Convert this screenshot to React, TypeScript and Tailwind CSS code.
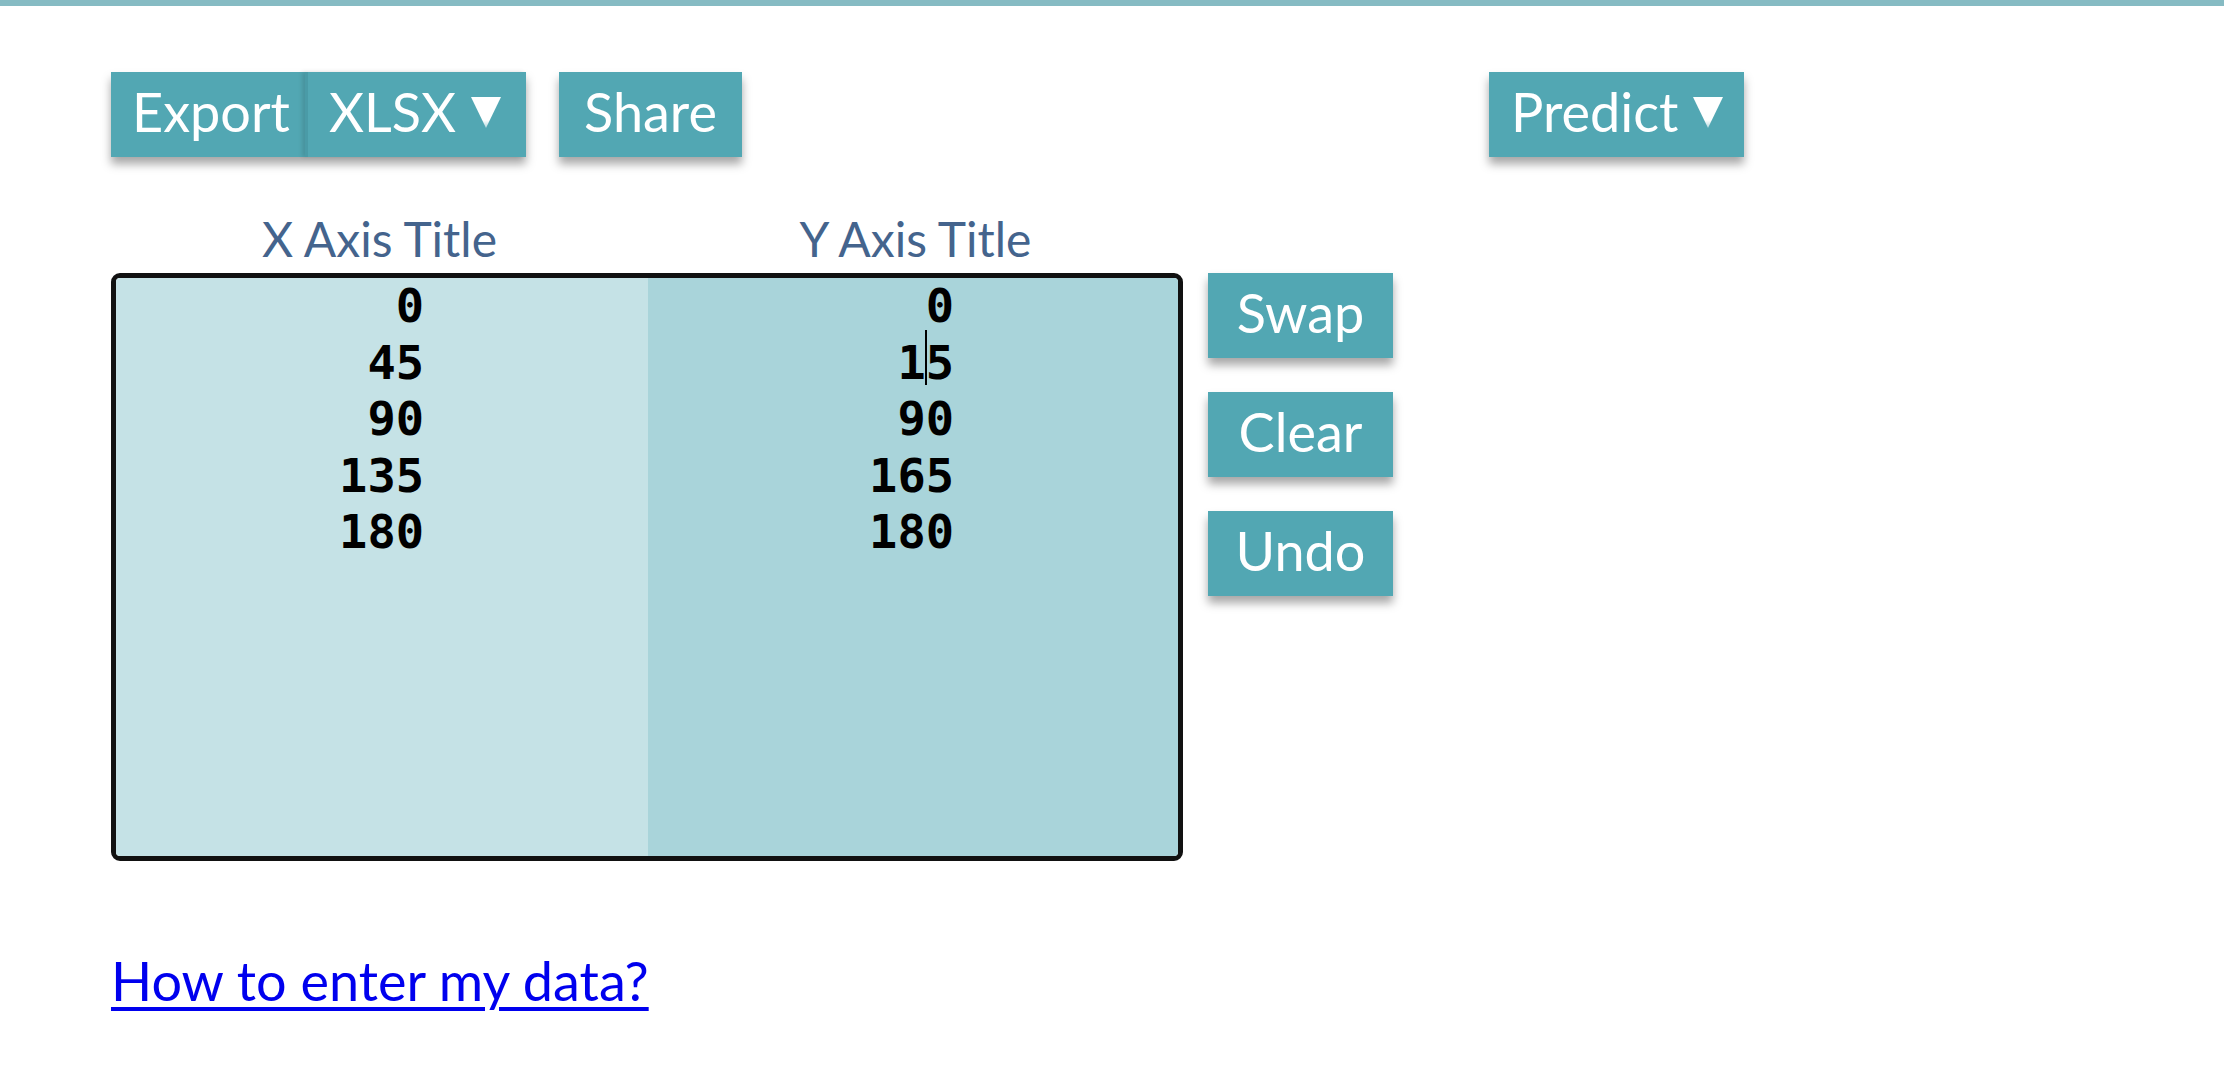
import React from "react";

const Tri = () => (
  <svg width="32" height="33" viewBox="0 0 32 33" className="inline-block">
    <defs>
      <linearGradient id="tg" x1="0" y1="0" x2="0" y2="1">
        <stop offset="0" stopColor="#ffffff" />
        <stop offset="0.75" stopColor="#ffffff" />
        <stop offset="1" stopColor="#ffffff" stopOpacity="0.55" />
      </linearGradient>
    </defs>
    <polygon points="1,1 31,1 16,32" fill="url(#tg)" />
  </svg>
);

const SideBtn = ({ label }: { label: string }) => (
  <button className="h-[85px] w-[185px] bg-[#52a7b3] text-white text-[54px] leading-none pb-[5px] shadow-[0_7px_9px_rgba(0,0,0,0.35)] flex items-center justify-center">
    {label}
  </button>
);

const xs = ["0", "45", "90", "135", "180"];

export default function App() {
  return (
    <div
      className="min-h-screen bg-white"
      style={{ fontFamily: "Lato, 'Noto Sans', sans-serif" }}
    >
      <div className="h-[6px] bg-[#86bbc3]" />
      <div className="pl-[111px] pt-[66px]">
        <div className="flex items-start h-[85px]">
          <div className="flex h-[85px] shadow-[0_7px_9px_rgba(0,0,0,0.35)]">
            <button className="h-full w-[194px] bg-[#52a7b3] text-white text-[54px] leading-none pl-[21px] pb-[5px] text-left">
              Export
            </button>
            <button className="h-full w-[221px] bg-[#52a7b3] text-white text-[54px] leading-none border-l-[3px] border-[#4a9ba7] shadow-[-3px_0_4px_rgba(0,0,0,0.12)] flex items-center pl-[21px] pb-[5px] gap-[14px]">
              <span>XLSX</span>
              <Tri />
            </button>
          </div>
          <button className="ml-[33px] h-[85px] w-[183px] bg-[#52a7b3] text-white text-[54px] leading-none pb-[5px] shadow-[0_7px_9px_rgba(0,0,0,0.35)]">
            Share
          </button>
          <button className="ml-[747px] h-[85px] w-[255px] bg-[#52a7b3] text-white text-[54px] leading-none shadow-[0_7px_9px_rgba(0,0,0,0.35)] flex items-center pl-[22px] pb-[5px] gap-[14px]">
            <span>Predict</span>
            <Tri />
          </button>
        </div>

        <div className="flex w-[1072px] mt-[53px] h-[50px] items-center text-[#44648d] text-[48px] leading-none pt-[7px]">
          <div className="w-[537px] text-center">X Axis Title</div>
          <div className="flex-1 text-center">Y Axis Title</div>
        </div>

        <div className="flex items-start gap-[25px] mt-[13px]">
          <div className="w-[1072px] h-[588px] border-[5px] border-[#111111] rounded-[9px] overflow-hidden flex">
            <div
              className="w-[532px] h-full bg-[#c5e2e6] pr-[224px] text-right font-bold text-[47px] leading-[56.5px] text-black"
              style={{ fontFamily: "'DejaVu Sans Mono', monospace" }}
            >
              {xs.map((v) => (
                <div key={v}>{v}</div>
              ))}
            </div>
            <div
              className="flex-1 h-full bg-[#a9d4da] pr-[224px] text-right font-bold text-[47px] leading-[56.5px] text-black"
              style={{ fontFamily: "'DejaVu Sans Mono', monospace" }}
            >
              <div>0</div>
              <div>
                1<span className="relative"><span className="absolute left-[-1px] top-[-5px] w-[2px] h-[55px] bg-black" /></span>5
              </div>
              <div>90</div>
              <div>165</div>
              <div>180</div>
            </div>
          </div>
          <div className="flex flex-col gap-[34px]">
            <SideBtn label="Swap" />
            <SideBtn label="Clear" />
            <SideBtn label="Undo" />
          </div>
        </div>

        <div className="mt-[89px]">
          <a
            href="#"
            className="text-[#0000ee] text-[54px] leading-[62px] underline decoration-[4px] underline-offset-[6px]"
          >
            How to enter my data?
          </a>
        </div>
      </div>
    </div>
  );
}
